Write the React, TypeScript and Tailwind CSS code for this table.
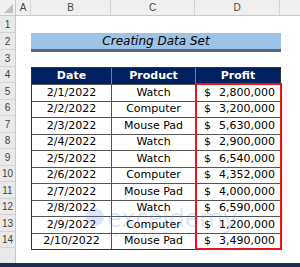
import React from 'react';

const rows: [string, string, string][] = [
  ['2/1/2022', 'Watch', '2,800,000'],
  ['2/2/2022', 'Computer', '3,200,000'],
  ['2/3/2022', 'Mouse Pad', '5,630,000'],
  ['2/4/2022', 'Watch', '2,900,000'],
  ['2/5/2022', 'Watch', '6,540,000'],
  ['2/6/2022', 'Computer', '4,352,000'],
  ['2/7/2022', 'Mouse Pad', '4,000,000'],
  ['2/8/2022', 'Watch', '6,590,000'],
  ['2/9/2022', 'Computer', '1,200,000'],
  ['2/10/2022', 'Mouse Pad', '3,490,000'],
];

// row heights in px, alternating so the grid lands on whole pixels
const rowHeights = [17, 17, 17, 16, 17, 16, 17, 16, 17, 16, 17, 16, 17, 16];

const cellFont = { fontFamily: '"Comic Sans MS", "DejaVu Sans", sans-serif' };

const App: React.FC = () => {
  return (
    <div className="w-[300px] h-[267px] overflow-hidden bg-white flex flex-col border-b-[4px] border-[#1f2d4d]">
      {/* Column headers */}
      <div className="flex h-[16px] shrink-0 bg-[#efefef] border-b border-[#c9c9c9] text-[10px] text-[#444]" style={{ fontFamily: '"Liberation Sans", Arial, sans-serif' }}>
        <div className="w-[16px] border-r border-[#c9c9c9] relative">
          <div className="absolute right-[2px] bottom-[2px] w-0 h-0 border-l-[9px] border-l-transparent border-b-[9px] border-b-[#c2c2c2]" />
        </div>
        <div className="w-[15px] border-r border-[#d4d4d4] flex items-center justify-center">A</div>
        <div className="w-[80px] border-r border-[#d4d4d4] flex items-center justify-center">B</div>
        <div className="w-[84px] border-r border-[#d4d4d4] flex items-center justify-center">C</div>
        <div className="w-[85px] border-r border-[#d4d4d4] flex items-center justify-center">D</div>
        <div className="flex-1" />
      </div>

      <div className="flex flex-1 min-h-0">
        {/* Row headers */}
        <div className="w-[16px] shrink-0 bg-[#e9e9e9] border-r border-[#c9c9c9] flex flex-col text-[10px] text-[#444]" style={{ fontFamily: '"Liberation Sans", Arial, sans-serif' }}>
          {rowHeights.map((h, i) => (
            <div
              key={i}
              className={`${h === 17 ? 'h-[17px]' : 'h-[16px]'} border-b border-[#d4d4d4] flex items-center justify-center`}
            >
              {i + 1}
            </div>
          ))}
        </div>

        {/* Sheet */}
        <div className="flex-1 relative" style={cellFont}>
          <div className="ml-[15px] w-[250px]">
            <div className="h-[17px]" />
            {/* Title */}
            <div className="h-[19px] bg-[#9dc3e6] border-b-[3px] border-[#5b6673] flex items-center justify-center text-[12px] italic text-black">
              Creating Data Set
            </div>
            <div className="h-[15px]" />

            {/* Table */}
            <div className="relative border border-[#333] text-[11px] text-black">
              <div className="flex h-[16px] bg-[#002060] text-white font-semibold">
                <div className="w-[80px] border-r border-[#7f7f7f] flex items-center justify-center">Date</div>
                <div className="w-[84px] border-r border-[#7f7f7f] flex items-center justify-center">Product</div>
                <div className="flex-1 flex items-center justify-center">Profit</div>
              </div>
              {rows.map((r, i) => (
                <div
                  key={r[0]}
                  className={`flex ${i % 2 === 0 ? 'h-[17px]' : 'h-[16px]'} border-t border-[#555]`}
                >
                  <div className="w-[80px] border-r border-[#555] flex items-center justify-center">{r[0]}</div>
                  <div className="w-[84px] border-r border-[#555] flex items-center justify-center">{r[1]}</div>
                  <div className="flex-1 flex items-center justify-between pl-[8px] pr-[5px]">
                    <span>$</span>
                    <span>{r[2]}</span>
                  </div>
                </div>
              ))}
              {/* highlight box over Profit values */}
              <div className="absolute left-[163px] right-[-2px] top-[15px] bottom-[-1px] border-2 border-[#e8151b] pointer-events-none" />
            </div>
          </div>

          {/* watermark */}
          <div className="absolute left-[70px] top-[188px] flex flex-col items-start opacity-20 pointer-events-none">
            <div className="flex items-center gap-[3px]">
              <div className="w-[18px] h-[18px] rounded-full bg-[#4a7fd8]" />
              <span className="text-[26px] leading-none text-[#4a7fd8]" style={{ fontFamily: '"Open Sans", sans-serif' }}>exceldemy</span>
            </div>
            <span className="ml-[22px] text-[7px] tracking-[2px] text-[#4a7fd8]" style={{ fontFamily: '"Open Sans", sans-serif' }}>EXCEL · DATA · BI</span>
          </div>
        </div>
      </div>
    </div>
  );
};

export default App;
